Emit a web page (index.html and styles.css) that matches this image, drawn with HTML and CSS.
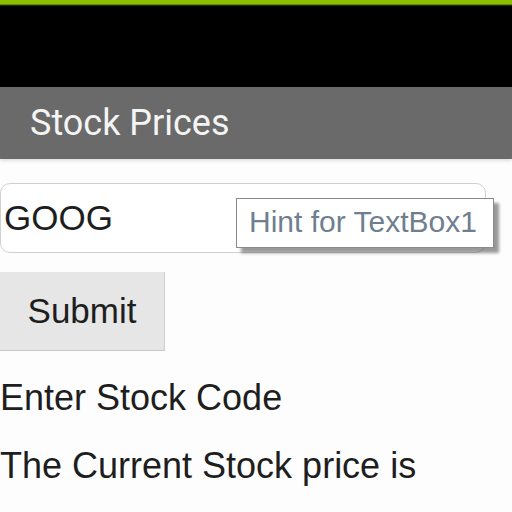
FILE: index.html
```html
<!DOCTYPE html>
<html>
<head>
<meta charset="utf-8">
<link rel="stylesheet" href="styles.css">
</head>
<body>
<div class="statusbar"></div>
<header class="titlebar">Stock Prices</header>
<main class="content">
  <div class="field">
    <span class="field-value">GOOG</span>
    <div class="tooltip">Hint for TextBox1</div>
  </div>
  <div class="button">Submit</div>
  <p class="label first">Enter Stock Code</p>
  <p class="label second">The Current Stock price is</p>
</main>
</body>
</html>
```
FILE: styles.css
```css
html, body {
  margin: 0;
  padding: 0;
  background: #fdfdfd;
}
body {
  font-family: "Liberation Sans", Arial, sans-serif;
  color: #1e1e1e;
  width: 512px;
  height: 512px;
  overflow: hidden;
}
.statusbar {
  height: 87px;
  background: linear-gradient(to bottom, #8cbf00 0, #8cbf00 4px, #3c5200 5px, #000 6px, #000 100%);
}
.titlebar {
  height: 72px;
  line-height: 72px;
  background: #6a6a6a;
  color: #f4f4f4;
  font-family: Roboto, "Liberation Sans", sans-serif;
  font-size: 36px;
  padding-left: 30px;
  box-shadow: 0 2px 3px rgba(0, 0, 0, 0.12);
  position: relative;
}
.content {
  padding-top: 24px;
}
.field {
  position: relative;
  box-sizing: border-box;
  width: 486px;
  height: 70px;
  border: 1px solid #d0d0d0;
  border-radius: 10px;
  background: #fff;
  display: flex;
  align-items: center;
  padding-left: 3px;
}
.field-value {
  font-size: 35px;
  line-height: 40px;
}
.tooltip {
  position: absolute;
  left: 235px;
  top: 14px;
  box-sizing: border-box;
  width: 258px;
  height: 50px;
  border: 1px solid #8a8a8a;
  background: #fff;
  color: #6f7f90;
  font-size: 30px;
  line-height: 46px;
  padding-left: 12px;
  box-shadow: 5px 5px 3px rgba(0, 0, 0, 0.4);
}
.button {
  margin-top: 19px;
  box-sizing: border-box;
  width: 165px;
  height: 79px;
  background: #e6e6e6;
  border-right: 1px solid #cfcfcf;
  border-bottom: 1px solid #c8c8c8;
  display: flex;
  align-items: center;
  justify-content: center;
  font-size: 35px;
}
.label {
  margin: 0;
  font-size: 36px;
  line-height: 40px;
}
.first {
  margin-top: 27px;
}
.second {
  margin-top: 28px;
}
```
